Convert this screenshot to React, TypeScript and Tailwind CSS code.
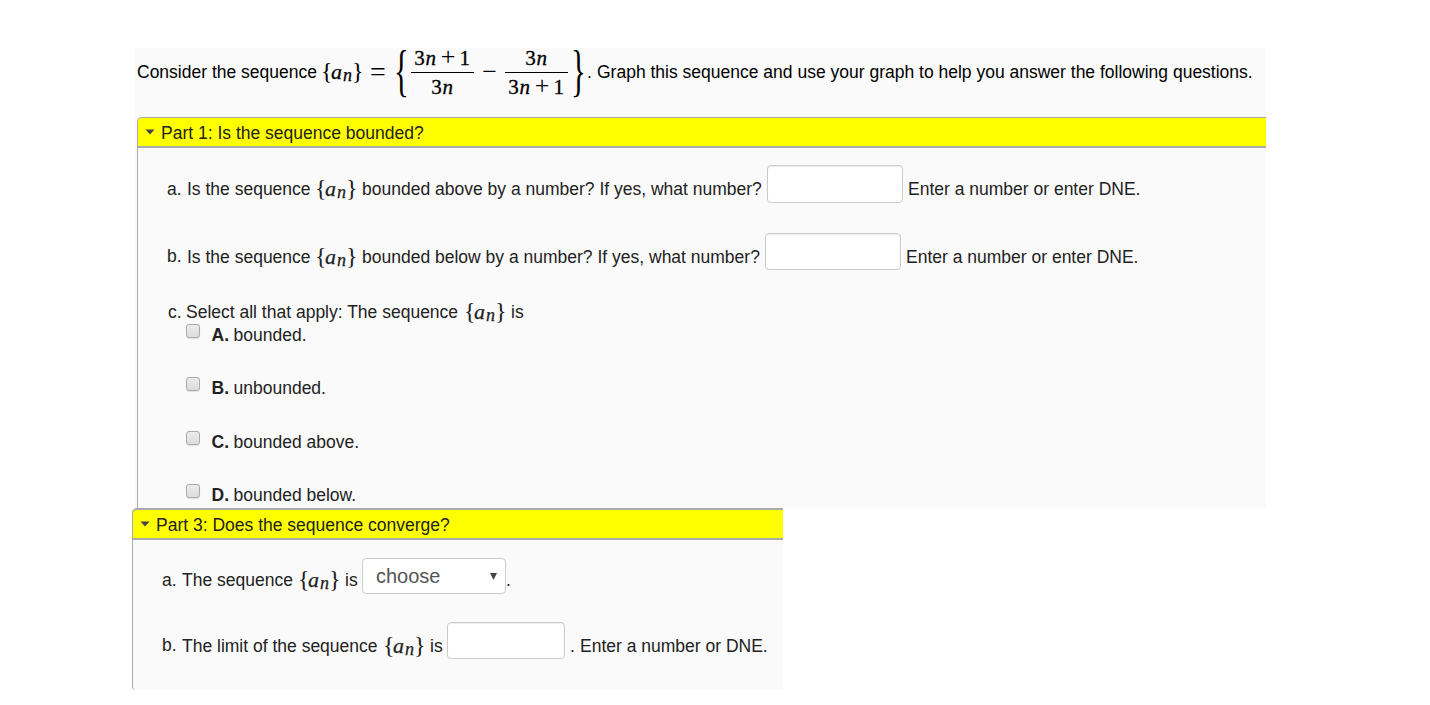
import type { ReactNode } from "react";

function Seq({ className = "" }: { className?: string }) {
  return (
    <span className={`flex shrink-0 whitespace-nowrap font-['Liberation_Serif',serif] text-[22px] leading-6 ${className}`}>
      <span className="w-[10px] shrink-0 text-[24px] leading-[22px]">{"{"}</span>
      <span className="w-3 shrink-0 italic [-webkit-text-stroke:0.25px_currentColor]">a</span>
      <span className="w-[9px] shrink-0 pt-[3px] text-[18px] italic [-webkit-text-stroke:0.25px_currentColor]">n</span>
      <span className="w-[10px] shrink-0 text-[24px] leading-[22px]">{"}"}</span>
    </span>
  );
}

function Text({ className = "", children }: { className?: string; children: ReactNode }) {
  return <span className={`block shrink-0 whitespace-nowrap ${className}`}>{children}</span>;
}

function Plus() {
  return <span className="mr-[4px] ml-[4px] text-[26px] leading-[12px] tracking-normal [-webkit-text-stroke:0px]">+</span>;
}

function Fraction({ top, bottom }: { top: ReactNode; bottom: ReactNode }) {
  return (
    <span className="flex w-[63px] shrink-0 flex-col text-center font-['Liberation_Serif',serif] text-[21px] tracking-[0.8px] whitespace-nowrap [-webkit-text-stroke:0.3px_black]">
      <span className="flex h-[25px] items-baseline justify-center border-b border-black leading-5">{top}</span>
      <span className="flex h-6 items-baseline justify-center pt-1 leading-5">{bottom}</span>
    </span>
  );
}

function BigBrace({ children }: { children: string }) {
  return (
    <span className="flex h-[50px] w-[10px] shrink-0 items-center justify-center font-['Liberation_Serif',serif] text-[56px] leading-[50px]">
      <span className="block -translate-y-[2px] scale-x-[0.55]">{children}</span>
    </span>
  );
}

function Header({ children, className = "" }: { children: string; className?: string }) {
  return (
    <div className={`flex items-center rounded-tl-[5px] border-b-2 border-l border-[#aaa] bg-[#ff0] pl-[7px] ${className}`}>
      <svg width="10" height="6" viewBox="0 0 10 6" className="shrink-0">
        <path d="M0.5 0.5h9L5 5.5z" fill="#444" />
      </svg>
      <span className="h-7 pt-px pl-[6px] leading-7 whitespace-nowrap">{children}</span>
    </div>
  );
}

function Field({ className }: { className: string }) {
  return (
    <input
      type="text"
      className={`block shrink-0 rounded-[4px] border border-[#ccc] bg-white shadow-[inset_0_1px_1px_rgba(0,0,0,0.075)] outline-none ${className}`}
    />
  );
}

function Choice({ letter, children, className = "" }: { letter: string; children: string; className?: string }) {
  return (
    <label className={`flex h-6 pl-12 ${className}`}>
      <input
        type="checkbox"
        className="mt-px block h-[14px] w-[14px] shrink-0 appearance-none rounded-[3px] border border-[#aaa] bg-linear-to-b from-[#ececec] to-[#dcdcdc] shadow-[0_1px_1px_rgba(0,0,0,0.1)]"
      />
      <Text className="ml-[11.5px] w-[22px] font-bold">{letter}.</Text>
      <Text>{children}</Text>
    </label>
  );
}

export default function App() {
  return (
    <main className="h-[705px] w-[1430px] overflow-hidden bg-white pt-12 pl-[132px] font-['Liberation_Sans',Arial,sans-serif] text-[17.5px] leading-6 text-[#222]">
      <section className="ml-[2px] h-[460px] w-[1132px] bg-[#fafafa] pl-[3px]">
        <div className="flex h-[69px] text-black">
          <Text className="w-[184px] pt-3">Consider the sequence</Text>
          <Seq className="mt-3 w-[49px]" />
          <span className="w-[26px] shrink-0 pt-3 font-['Liberation_Serif',serif] text-[28px]">=</span>
          <BigBrace>{"{"}</BigBrace>
          <span className="w-[5px] shrink-0" />
          <Fraction top={<>3<i>n</i><Plus />1</>} bottom={<>3<i>n</i></>} />
          <span className="w-[31px] shrink-0 pt-3 text-center font-['Liberation_Serif',serif] text-[26px]">−</span>
          <Fraction top={<>3<i>n</i></>} bottom={<>3<i>n</i><Plus />1</>} />
          <span className="w-[5px] shrink-0" />
          <BigBrace>{"}"}</BigBrace>
          <Text className="w-[14px] pt-3 pl-[4px]">.</Text>
          <Text className="pt-3">Graph this sequence and use your graph to help you answer the following questions.</Text>
        </div>

        <Header className="border-t">Part 1: Is the sequence bounded?</Header>
        <div className="h-[360px] border-l border-[#aaa]">
          <div className="flex h-[68px] pl-[29px]">
            <Text className="w-[20px] pt-[29px]">a.</Text>
            <Text className="w-[128px] pt-[29px]">Is the sequence</Text>
            <Seq className="mt-[29px] w-[47px]" />
            <Text className="w-[405px] pt-[29px]">bounded above by a number? If yes, what number?</Text>
            <Field className="mt-[17px] h-[38px] w-[136px]" />
            <Text className="ml-[5px] pt-[29px]">Enter a number or enter DNE.</Text>
          </div>
          <div className="flex h-[68px] pl-[29px]">
            <Text className="w-[20px] pt-[28px]">b.</Text>
            <Text className="w-[128px] pt-[29px]">Is the sequence</Text>
            <Seq className="mt-[29px] w-[47px]" />
            <Text className="w-[403px] pt-[29px]">bounded below by a number? If yes, what number?</Text>
            <Field className="mt-[17px] h-[37px] w-[136px]" />
            <Text className="ml-[5px] pt-[29px]">Enter a number or enter DNE.</Text>
          </div>
          <div className="flex h-[39px] pt-4 pl-[30px]">
            <Text className="w-[18px]">c.</Text>
            <Text className="w-[278px]">Select all that apply: The sequence</Text>
            <Seq className="w-[47px]" />
            <Text>is</Text>
          </div>
          <Choice letter="A">bounded.</Choice>
          <Choice letter="B" className="mt-[29px]">unbounded.</Choice>
          <Choice letter="C" className="mt-[30px]">bounded above.</Choice>
          <Choice letter="D" className="mt-[29px]">bounded below.</Choice>
        </div>
      </section>

      <section className="h-[182px] w-[651px] bg-[#fafafa]">
        <Header className="border-t-2">Part 3: Does the sequence converge?</Header>
        <div className="h-[150px] rounded-bl-[4px] border-l border-[#aaa] pt-[18px] pl-[29px]">
          <div className="flex h-[64px]">
            <Text className="w-[20px] pt-[10px]">a.</Text>
            <Text className="w-[116px] pt-[10px]">The sequence</Text>
            <Seq className="mt-[10px] w-[47px]" />
            <Text className="w-[17px] pt-[10px]">is</Text>
            <button className="flex h-[36px] w-[144px] shrink-0 items-center justify-between rounded-[4px] border border-[#ccc] bg-white pr-2 pl-[13px] text-[20px] text-[#555]">
              <span>choose</span>
              <svg width="7" height="7" viewBox="0 0 7 7">
                <path d="M0 0h7L3.5 7z" fill="#444" />
              </svg>
            </button>
            <Text className="pt-[10px]">.</Text>
          </div>
          <div className="flex">
            <Text className="w-[20px] pt-[11px]">b.</Text>
            <Text className="w-[201px] pt-[12px]">The limit of the sequence</Text>
            <Seq className="mt-[12px] w-[47px]" />
            <Text className="w-[17px] pt-[12px]">is</Text>
            <Field className="h-[37px] w-[118px]" />
            <Text className="w-[15px] pt-[12px] pl-[5px]">.</Text>
            <Text className="pt-[12px]">Enter a number or DNE.</Text>
          </div>
        </div>
      </section>
    </main>
  );
}
